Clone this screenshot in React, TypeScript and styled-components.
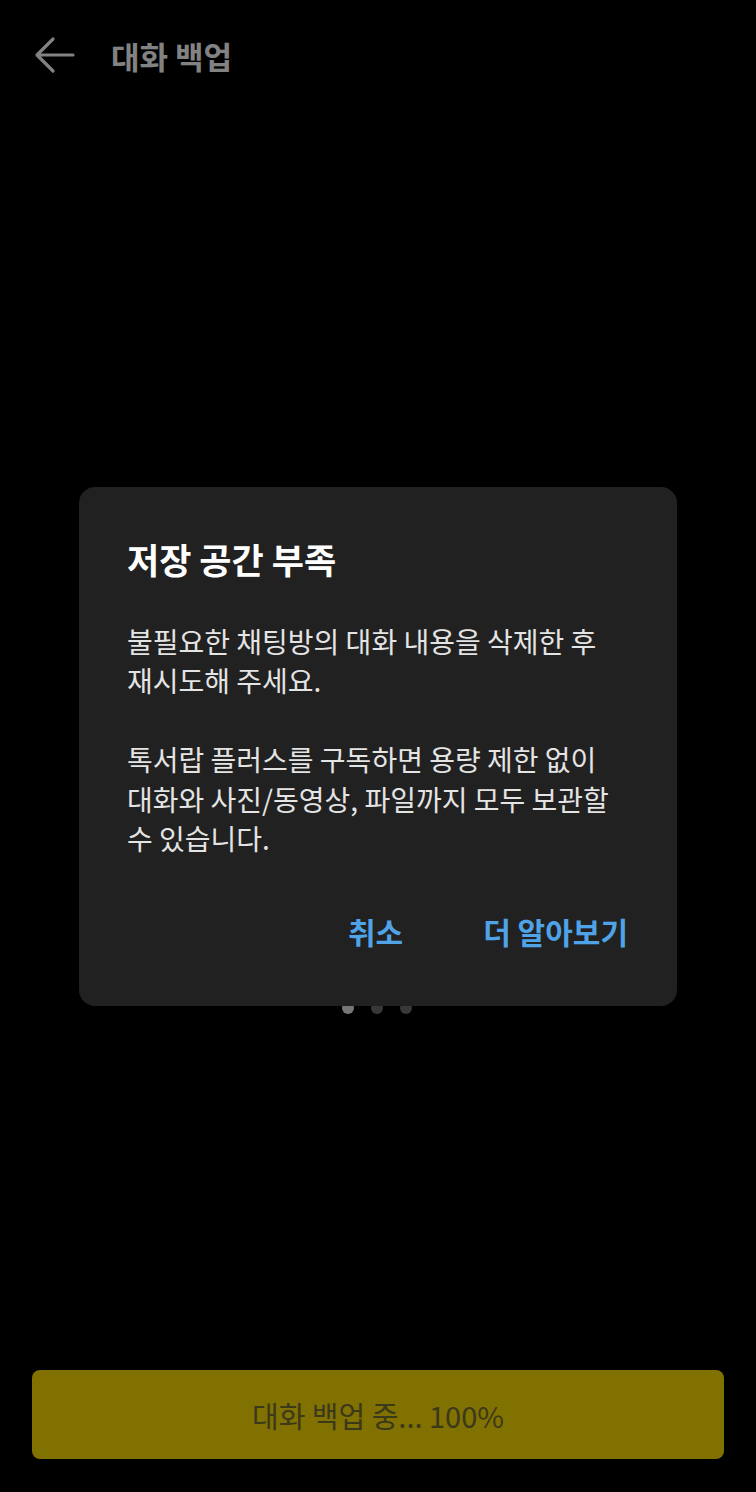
import React, { VFC } from "react";
import styled, { createGlobalStyle } from "styled-components";

const GlobalStyle = createGlobalStyle`
  html, body {
    margin: 0;
    padding: 0;
    background: #000;
  }
  body {
    font-family: "Noto Sans CJK KR", "Noto Sans", sans-serif;
  }
  * {
    box-sizing: border-box;
  }
`;

const Page = styled.div`
  position: relative;
  display: flex;
  flex-direction: column;
  width: 756px;
  height: 1492px;
  background: #000;
  overflow: hidden;
`;

const Header = styled.header`
  display: flex;
  align-items: center;
  height: 110px;
  padding-left: 34px;
`;

const BackButton = styled.button`
  display: flex;
  align-items: center;
  justify-content: center;
  width: 42px;
  height: 44px;
  padding: 0;
  margin-right: 35px;
  border: none;
  background: transparent;
`;

const HeaderTitle = styled.h1`
  margin: 0;
  font-size: 31px;
  font-weight: 700;
  color: #ffffff;
`;

const Main = styled.main`
  flex: 1;
  display: flex;
  flex-direction: column;
  align-items: center;
`;

const Slide = styled.div`
  height: 892px;
  width: 100%;
`;

const Dots = styled.div`
  display: flex;
  gap: 17px;
  margin-right: 2px;
`;

const Dot = styled.span<{ $active?: boolean }>`
  width: 12px;
  height: 12px;
  border-radius: 50%;
  background: ${({ $active }) => ($active ? "#e8e8e8" : "#6e6e6e")};
`;

const Footer = styled.footer`
  padding: 0 32px 33px;
`;

const ProgressButton = styled.button`
  width: 100%;
  height: 89px;
  border: none;
  border-radius: 8px;
  background: #fddd00;
  color: #757036;
  font-family: "Noto Sans CJK KR", "Noto Sans", sans-serif;
  font-size: 29px;
  font-weight: 400;
`;

const Backdrop = styled.div`
  position: absolute;
  inset: 0;
  display: flex;
  align-items: center;
  justify-content: center;
  background: rgba(0, 0, 0, 0.49);
`;

const Dialog = styled.div`
  width: 598px;
  padding: 49px 49px 55px 48px;
  border-radius: 16px;
  background: #212121;
`;

const DialogTitle = styled.h2`
  margin: 0 0 40px;
  font-size: 35px;
  line-height: 46px;
  font-weight: 700;
  color: #ffffff;
`;

const DialogBody = styled.p`
  margin: 0;
  font-size: 28px;
  line-height: 39.5px;
  font-weight: 400;
  color: #e4e4e4;
  white-space: pre-line;
`;

const ButtonRow = styled.div`
  display: flex;
  justify-content: flex-end;
  gap: 80px;
  margin-top: 52px;
`;

const TextButton = styled.button`
  padding: 0;
  height: 40px;
  border: none;
  background: transparent;
  color: #4fa3e6;
  font-family: "Noto Sans CJK KR", "Noto Sans", sans-serif;
  font-size: 30px;
  font-weight: 700;
  line-height: 40px;
`;

const BackIcon: VFC = () => (
  <svg width="42" height="42" viewBox="0 0 42 42" fill="none">
    <path
      d="M39 21H4M19 5L3 21l16 16"
      stroke="#ffffff"
      strokeWidth="3.2"
      strokeLinecap="round"
      strokeLinejoin="round"
    />
  </svg>
);

const App: VFC = () => {
  return (
    <>
      <GlobalStyle />
      <Page>
        <Header>
          <BackButton aria-label="뒤로">
            <BackIcon />
          </BackButton>
          <HeaderTitle>대화 백업</HeaderTitle>
        </Header>
        <Main>
          <Slide />
          <Dots>
            <Dot $active />
            <Dot />
            <Dot />
          </Dots>
        </Main>
        <Footer>
          <ProgressButton>대화 백업 중... 100%</ProgressButton>
        </Footer>

        <Backdrop>
          <Dialog role="dialog">
            <DialogTitle>저장 공간 부족</DialogTitle>
            <DialogBody>
              {"불필요한 채팅방의 대화 내용을 삭제한 후\n재시도해 주세요.\n\n톡서랍 플러스를 구독하면 용량 제한 없이\n대화와 사진/동영상, 파일까지 모두 보관할\n수 있습니다."}
            </DialogBody>
            <ButtonRow>
              <TextButton>취소</TextButton>
              <TextButton>더 알아보기</TextButton>
            </ButtonRow>
          </Dialog>
        </Backdrop>
      </Page>
    </>
  );
};

export default App;
